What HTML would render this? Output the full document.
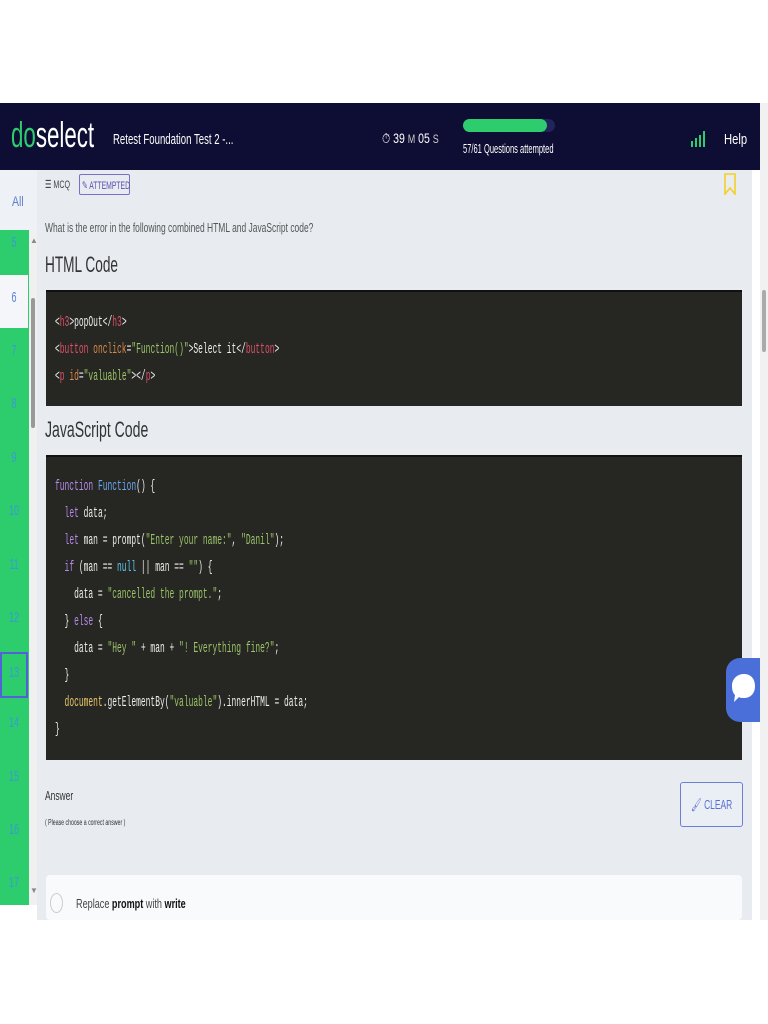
<!DOCTYPE html>
<html><head><meta charset="utf-8"><style>
*{margin:0;padding:0;box-sizing:border-box}
body{width:768px;height:1024px;background:#fff;font-family:"Liberation Sans",sans-serif;position:relative;overflow:hidden}
.hdr{position:absolute;left:0;top:103px;width:760px;height:67px;background:#0e0d33}
.main{position:absolute;left:37px;top:170px;width:715px;height:750px;background:#e8ecf1}
.side{position:absolute;left:0;width:30px;background:#2dcc6d}
.sb{position:absolute;left:29px;width:8px;background:#f0f0f0}
.n{position:absolute;left:0;width:28px;text-align:center;color:#3a9ad8;font-size:15px;transform:scaleX(.6)}
.code{position:absolute;left:46px;width:696px;background:#262622;border-top:2px solid #111;color:#eee;font-family:"Liberation Mono",monospace;font-size:15px}
.code div{position:absolute;left:9px;white-space:pre;transform:scaleX(.53);transform-origin:left}
.r{color:#e0506a}.o{color:#d7894c}.g{color:#9cc46a}.p{color:#b58ae8}.b{color:#6aa8f0}.c{color:#5ec8f0}
.t{position:absolute;white-space:nowrap;transform-origin:left;transform:scaleX(.65)}
</style></head><body>
<div class="hdr">
 <div class="t" style="left:11px;top:11px;font-size:36px;color:#fff;transform:scaleX(.62)"><span style="color:#2dcc6d">do</span>select</div>
 <div class="t" style="left:113px;top:28px;font-size:15px;color:#fff;transform:scaleX(.64)">Retest Foundation Test 2 -...</div>
 <div class="t" style="left:382px;top:27px;font-size:14px;color:#fff;transform:scaleX(.75)">⏱ 39 <span style="font-size:12px;color:#ccc">M</span> 05 <span style="font-size:12px;color:#ccc">S</span></div>
 <div style="position:absolute;left:463px;top:16px;width:92px;height:13px;border-radius:7px;background:#20245a"></div>
 <div style="position:absolute;left:463px;top:16px;width:84px;height:13px;border-radius:7px;background:#2dcc6d"></div>
 <div class="t" style="left:463px;top:38px;font-size:13px;color:#fff;transform:scaleX(.58)">57/61 Questions attempted</div>
 <svg style="position:absolute;left:691px;top:28px" width="14" height="16"><g fill="#2dcc6d"><rect x="0" y="10" width="2" height="6"/><rect x="4" y="7" width="2" height="9"/><rect x="8" y="4" width="2" height="12"/><rect x="12" y="0" width="2" height="16"/></g></svg>
 <div class="t" style="left:724px;top:28px;font-size:15px;color:#fff;transform:scaleX(.75)">Help</div>
</div>
<div style="position:absolute;left:760px;top:103px;width:8px;height:817px;background:#f1f1f1"></div>
<div style="position:absolute;left:762px;top:290px;width:4px;height:62px;background:#aaa;border-radius:2px"></div>
<div class="main"></div>
<div style="position:absolute;left:0;top:170px;width:37px;height:60px;background:#eef1f5"></div>
<div class="t" style="left:12px;top:193px;font-size:14px;color:#5a7fd0;transform:scaleX(.75)">All</div>
<div class="side" style="top:230px;height:675px"></div>
<div style="position:absolute;left:0;top:275px;width:28px;height:53px;background:#f4f6fa"></div>
<div style="position:absolute;left:0;top:652px;width:28px;height:46px;border:2px solid #5360d8"></div>
<div class="sb" style="top:230px;height:675px"></div>
<div style="position:absolute;left:31px;top:298px;width:4px;height:130px;background:#999;border-radius:2px"></div>
<div style="position:absolute;left:30px;top:236px;font-size:8px;color:#888">▲</div>
<div style="position:absolute;left:30px;top:886px;font-size:8px;color:#888">▼</div>
<div class="n" style="top:234px">5</div><div class="n" style="top:289px;color:#5a7fd0">6</div>
<div class="n" style="top:342px">7</div><div class="n" style="top:395px">8</div><div class="n" style="top:449px">9</div>
<div class="n" style="top:502px">10</div><div class="n" style="top:556px">11</div><div class="n" style="top:609px">12</div>
<div class="n" style="top:664px">13</div><div class="n" style="top:714px">14</div><div class="n" style="top:768px">15</div>
<div class="n" style="top:821px">16</div><div class="n" style="top:874px">17</div>

<div class="t" style="left:45px;top:178px;font-size:11px;color:#444">☰ MCQ</div>
<div style="position:absolute;left:79px;top:174px;width:51px;height:21px;border:1px solid #7b6fc9;border-radius:2px"></div>
<div class="t" style="left:82px;top:179px;font-size:11px;color:#5a4fb0;transform:scaleX(.62)">✎ ATTEMPTED</div>
<svg style="position:absolute;left:724px;top:173px" width="12" height="22"><path d="M1 1h10v20l-5-6-5 6z" stroke="#f2d026" stroke-width="1.6" fill="none"/></svg>
<div class="t" style="left:45px;top:220px;font-size:13px;color:#555">What is the error in the following combined HTML and JavaScript code?</div>
<div class="t" style="left:45px;top:252px;font-size:22px;color:#333;transform:scaleX(.62)">HTML Code</div>
<div class="code" style="top:290px;height:116px">
<div style="top:22px">&lt;<span class="r">h3</span>&gt;popOut&lt;/<span class="r">h3</span>&gt;</div>
<div style="top:49px">&lt;<span class="r">button</span> <span class="o">onclick</span>=<span class="g">"Function()"</span>&gt;Select it&lt;/<span class="r">button</span>&gt;</div>
<div style="top:76px">&lt;<span class="r">p</span> <span class="o">id</span>=<span class="g">"valuable"</span>&gt;&lt;/<span class="r">p</span>&gt;</div>
</div>
<div class="t" style="left:45px;top:417px;font-size:22px;color:#333;transform:scaleX(.64)">JavaScript Code</div>
<div class="code" style="top:455px;height:305px">
<div style="top:21px"><span class="p">function</span> <span class="b">Function</span>() {</div>
<div style="top:48px">  <span class="p">let</span> data;</div>
<div style="top:75px">  <span class="p">let</span> man = prompt(<span class="g">"Enter your name:"</span>, <span class="g">"Danil"</span>);</div>
<div style="top:102px">  <span class="p">if</span> (man == <span class="c">null</span> || man == <span class="g">""</span>) {</div>
<div style="top:129px">    data = <span class="g">"cancelled the prompt."</span>;</div>
<div style="top:156px">  } <span class="p">else</span> {</div>
<div style="top:183px">    data = <span class="g">"Hey "</span> + man + <span class="g">"! Everything fine?"</span>;</div>
<div style="top:210px">  }</div>
<div style="top:237px">  <span style="color:#e6c86a">document</span>.getElementBy(<span class="g">"valuable"</span>).innerHTML = data;</div>
<div style="top:264px">}</div>
</div>
<div style="position:absolute;left:726px;top:658px;width:34px;height:64px;background:#4a6fd8;border-radius:14px 0 0 14px"></div>
<svg style="position:absolute;left:731px;top:672px" width="26" height="36"><path d="M13 2c7 0 11 5 11 12s-4 12-11 12c-2 0-4 0-5-1l-5 5 1-7c-2-2-3-5-3-9 0-7 5-12 12-12z" fill="#fff"/></svg>
<div class="t" style="left:45px;top:788px;font-size:13px;color:#333">Answer</div>
<div class="t" style="left:45px;top:818px;font-size:8px;color:#333">( Please choose a correct answer )</div>
<div style="position:absolute;left:680px;top:782px;width:63px;height:45px;border:1.5px solid #6b7fd8;border-radius:3px;background:#eaeef5"></div>
<div class="t" style="left:691px;top:797px;font-size:13px;color:#5a6fd0">🖌 CLEAR</div>
<div style="position:absolute;left:46px;top:875px;width:696px;height:45px;background:#f9fafb;border-radius:4px"></div>
<div style="position:absolute;left:50px;top:893px;width:13px;height:20px;border:1px solid #ccc;border-radius:50%"></div>
<div class="t" style="left:76px;top:896px;font-size:13px;color:#444;transform:scaleX(.7)">Replace <b style="color:#111">prompt</b> with <b style="color:#111">write</b></div>
</body></html>
